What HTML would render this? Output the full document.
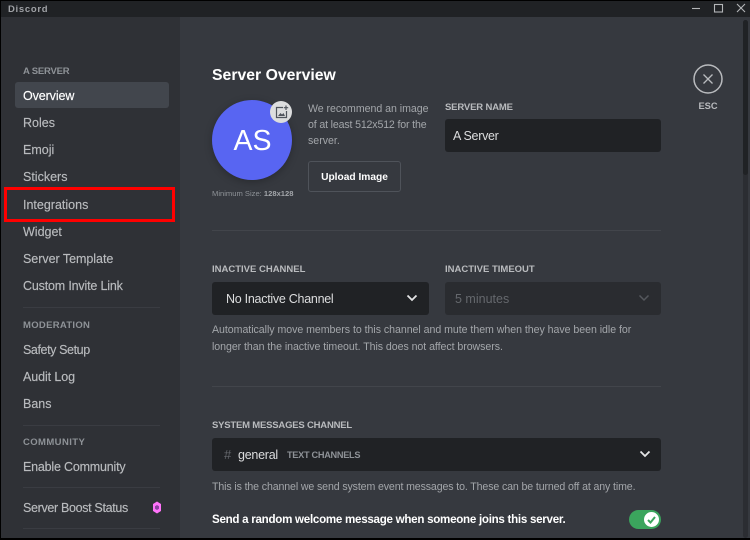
<!DOCTYPE html>
<html><head><meta charset="utf-8"><style>
html,body{margin:0;padding:0;background:#000}
#r{position:relative;width:750px;height:540px;overflow:hidden;background:#000;font-family:"Liberation Sans",sans-serif}
#r div{position:absolute;box-sizing:border-box}
.t{white-space:nowrap;line-height:16px;height:16px}
.n{left:23px;color:#b9bbbe;font-size:12.500px;-webkit-text-stroke:.15px #b9bbbe}
.h{left:23px;color:#8e9297;font-size:9.500px;font-weight:bold}
.l{color:#b9bbbe;font-size:9.500px;font-weight:bold}
.d{color:#a3a6aa;font-size:10.600px}
.s{left:23px;width:137px;height:1px;background:#3a3c42}
.hr{left:212px;width:449px;height:1px;background:#42454b}
.b{background:#202225;border-radius:3px}
</style></head><body><div id="r">
<div style="left:1px;top:1px;width:749px;height:16px;background:#202225"></div>
<div class="t" style="left:8px;top:2px;color:#a0a2a6;font-size:9.500px;font-weight:bold;letter-spacing:.7px">Discord</div>
<svg style="position:absolute;left:0;top:0" width="750" height="17" fill="none" stroke="#b4b6b9" stroke-width="1.100"><path d="M692 8.500H700"/><rect x="714.500" y="4.500" width="8" height="7.500"/><path d="M737 4L745 12M745 4L737 12"/></svg>
<div style="left:1px;top:17px;width:179px;height:521px;background:#2f3136"></div>
<div style="left:180px;top:17px;width:570px;height:521px;background:#36393f"></div>
<div style="left:743px;top:20px;width:5px;height:518px;background:#2b2d32;border-radius:3px"></div>
<div style="left:743px;top:20px;width:5px;height:155px;background:#202225;border-radius:3px"></div>

<div class="t h" style="top:64px;letter-spacing:-.2px">A SERVER</div>
<div style="left:15px;top:82px;width:154px;height:26px;background:#42464d;border-radius:3px"></div>
<div class="t n" style="top:88px;color:#fff;-webkit-text-stroke:.15px #fff;letter-spacing:-.1px">Overview</div>
<div class="t n" style="top:115px">Roles</div>
<div class="t n" style="top:142px">Emoji</div>
<div class="t n" style="top:169px">Stickers</div>
<div class="t n" style="top:197px">Integrations</div>
<div style="left:4px;top:187px;width:171px;height:35px;border:3px solid #f00"></div>
<div class="t n" style="top:224px">Widget</div>
<div class="t n" style="top:251px;letter-spacing:-.03px">Server Template</div>
<div class="t n" style="top:278px;letter-spacing:-.17px">Custom Invite Link</div>
<div class="s" style="top:307px"></div>
<div class="t h" style="top:318px;letter-spacing:.3px">MODERATION</div>
<div class="t n" style="top:342px;letter-spacing:-.4px">Safety Setup</div>
<div class="t n" style="top:369px;letter-spacing:-.1px">Audit Log</div>
<div class="t n" style="top:396px">Bans</div>
<div class="s" style="top:425px"></div>
<div class="t h" style="top:435px;letter-spacing:.4px">COMMUNITY</div>
<div class="t n" style="top:459px;letter-spacing:-.2px">Enable Community</div>
<div class="s" style="top:487px"></div>
<div class="t n" style="top:500px;letter-spacing:-.33px">Server Boost Status</div>
<svg style="position:absolute;left:152px;top:501px" width="10" height="13"><path d="M5 .5L9 3V10L5 12.500L1 10V3Z" fill="#ff73fa"/><path d="M5 4L7 5.200V7.800L5 9L3 7.800V5.200Z" fill="#8a3fa0"/></svg>
<div class="s" style="top:528px"></div>

<div class="t" style="left:212px;top:68px;color:#fff;font-size:15.800px;font-weight:bold">Server Overview</div>
<div style="left:212px;top:100px;width:80px;height:80px;border-radius:50%;background:#5865f2;box-shadow:0 2px 8px rgba(0,0,0,.25)"></div>
<div style="left:212px;top:101px;width:81px;height:80px;line-height:80px;text-align:center;color:#fff;font-size:28.500px">AS</div>
<div style="left:270px;top:101px;width:22px;height:22px;border-radius:50%;background:#dcddde"></div>
<svg style="position:absolute;left:275px;top:105px" width="14" height="14" fill="none" stroke="#4f545c" stroke-width="1.200"><path d="M8 2.500H1.500V12.500H11.500V6"/><path d="M11 0.500V5M8.800 2.700H13.200"/><path d="M3 11L5.500 8L7 9.500L8.500 8L10 11Z" fill="#4f545c" stroke="none"/></svg>
<div class="t" style="left:212px;top:186px;color:#8e9297;font-size:7.600px">Minimum Size: <b style="color:#a3a6aa">128x128</b></div>
<div class="t d" style="left:308px;top:101px;letter-spacing:-.03px">We recommend an image</div>
<div class="t d" style="left:308px;top:117px;letter-spacing:-.15px">of at least 512x512 for the</div>
<div class="t d" style="left:308px;top:133px">server.</div>
<div style="left:308px;top:161px;width:93px;height:31px;border:1px solid #4f535a;border-radius:3px;color:#fff;font-size:10.200px;font-weight:bold;line-height:31px;text-align:center">Upload Image</div>

<div class="t l" style="left:445px;top:100px;letter-spacing:-.15px">SERVER NAME</div>
<div class="b" style="left:445px;top:119px;width:216px;height:33px"></div>
<div class="t" style="left:453px;top:128px;color:#dcddde;font-size:12.500px;letter-spacing:-.3px">A Server</div>

<svg style="position:absolute;left:692px;top:64px" width="32" height="32" fill="none" stroke="#b9bbbe"><circle cx="16" cy="15" r="14" stroke-width="1.500"/><path d="M11.500 10.500L20.500 19.500M20.500 10.500L11.500 19.500" stroke-width="1.300"/></svg>
<div class="t" style="left:692px;width:32px;text-align:center;top:98px;color:#b9bbbe;font-size:9.300px;font-weight:bold">ESC</div>

<div class="hr" style="top:230px"></div>
<div class="t l" style="left:212px;top:262px">INACTIVE CHANNEL</div>
<div class="b" style="left:212px;top:282px;width:217px;height:33px"></div>
<div class="t" style="left:226px;top:291px;color:#dcddde;font-size:12.500px;letter-spacing:-.27px">No Inactive Channel</div>
<svg style="position:absolute;left:406px;top:294px" width="12" height="9" fill="none" stroke="#e4e5e6" stroke-width="1.800"><path d="M1.500 1.500L6 6L10.500 1.500"/></svg>
<div class="t l" style="left:445px;top:262px">INACTIVE TIMEOUT</div>
<div style="left:445px;top:282px;width:216px;height:33px;background:#2a2c30;border-radius:3px"></div>
<div class="t" style="left:455px;top:291px;color:#65686d;font-size:12.500px">5 minutes</div>
<svg style="position:absolute;left:638px;top:294px" width="12" height="9" fill="none" stroke="#55585d" stroke-width="1.500"><path d="M1.500 1.500L6 6L10.500 1.500"/></svg>
<div class="t d" style="left:212px;top:322px;letter-spacing:-.035px">Automatically move members to this channel and mute them when they have been idle for</div>
<div class="t d" style="left:212px;top:339px;letter-spacing:-.05px">longer than the inactive timeout. This does not affect browsers.</div>

<div class="hr" style="top:386px"></div>
<div class="t l" style="left:212px;top:418px;letter-spacing:-.2px">SYSTEM MESSAGES CHANNEL</div>
<div class="b" style="left:212px;top:438px;width:449px;height:33px"></div>
<div class="t" style="left:224px;top:447px;color:#66696e;font-size:13px">#</div>
<div class="t" style="left:238px;top:447px;color:#dcddde;font-size:12.500px;letter-spacing:-.25px">general</div>
<div class="t" style="left:287px;top:447px;color:#8e9297;font-size:9.200px;font-weight:bold;letter-spacing:-.3px">TEXT CHANNELS</div>
<svg style="position:absolute;left:639px;top:450px" width="12" height="9" fill="none" stroke="#e4e5e6" stroke-width="1.800"><path d="M1.500 1.500L6 6L10.500 1.500"/></svg>
<div class="t d" style="left:212px;top:479px;letter-spacing:-.12px">This is the channel we send system event messages to. These can be turned off at any time.</div>
<div class="t" style="left:212px;top:512px;color:#fff;font-size:11.600px;font-weight:bold;letter-spacing:-.28px">Send a random welcome message when someone joins this server.</div>
<div style="left:629px;top:510px;width:32px;height:19px;border-radius:10px;background:#3ba55d"></div>
<div style="left:644px;top:512px;width:15px;height:15px;border-radius:50%;background:#fff"></div>
<svg style="position:absolute;left:644px;top:512px" width="15" height="15" fill="none" stroke="#3ba55d" stroke-width="2"><path d="M4 8L6.500 10.500L11 5"/></svg>
</div></body></html>
